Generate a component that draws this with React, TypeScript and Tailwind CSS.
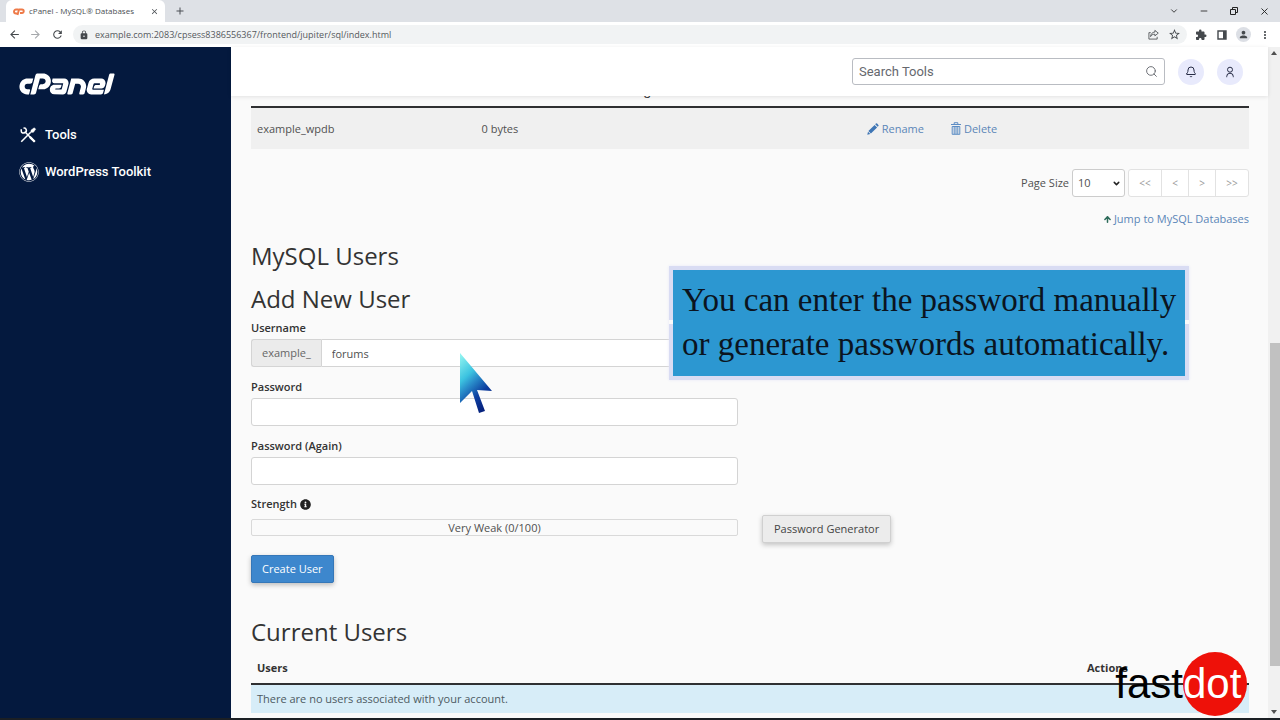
import { useState } from "react";
import type { ReactNode } from "react";
import { FaCpanel, FaWordpress, FaInfoCircle } from "react-icons/fa";
import {
  MdAdd,
  MdArrowBack,
  MdArrowForward,
  MdClose,
  MdExtension,
  MdLock,
  MdMoreVert,
  MdPerson,
  MdRefresh,
  MdStarBorder,
} from "react-icons/md";
import { ArrowUp, Bell, ChevronDown, Minus, Search, X } from "lucide-react";

const BrowserBar = () => (
  <header className="shrink-0">
    <div className="flex h-[22px] items-center bg-[#dee1e6] pl-[6px] text-[#4b4f54]">
      <div className="flex h-full w-[159px] items-center rounded-t-md bg-white pr-[6px] pl-[7px]">
        <svg viewBox="0 0 24 16" className="h-[9px] w-3 shrink-0" fill="none" stroke="#ee7a48" strokeWidth="3.8">
          <path d="M10 4H6a4 4 0 0 0 0 8h3" />
          <path d="M9 15l3-11h6a3.5 3.5 0 0 1 0 7h-4" />
        </svg>
        <span className="ml-1 grow text-[8px] whitespace-nowrap">cPanel - MySQL® Databases</span>
        <button aria-label="Close tab">
          <MdClose className="size-[9px]" />
        </button>
      </div>
      <button aria-label="New tab" className="ml-[9px]">
        <MdAdd className="size-3" />
      </button>
      <div className="ml-auto flex items-center gap-5 pr-[10px] text-[#222]">
        <button aria-label="Search tabs">
          <ChevronDown className="size-[10px]" />
        </button>
        <button aria-label="Minimize">
          <Minus className="size-[10px]" />
        </button>
        <button aria-label="Restore">
          <svg viewBox="0 0 10 10" className="size-[10px]" fill="none" stroke="currentColor">
            <path d="M1.5 3.5h5v5h-5zM3.5 3.2V1.5h5v5H6.8" />
          </svg>
        </button>
        <button aria-label="Close window">
          <X className="size-[11px]" />
        </button>
      </div>
    </div>
    <div className="flex h-[25px] items-center bg-white pr-[9px] pl-2 text-[#45494d]">
      <button aria-label="Back">
        <MdArrowBack className="size-[13px]" />
      </button>
      <button aria-label="Forward" className="ml-2 text-[#a6a9ac]">
        <MdArrowForward className="size-[13px]" />
      </button>
      <button aria-label="Reload" className="ml-[9px]">
        <MdRefresh className="size-[13px]" />
      </button>
      <div className="ml-[9px] flex h-[19px] grow items-center rounded-full bg-[#f1f3f4] pr-[6px] pl-[6px]">
        <MdLock className="size-[10px]" />
        <input
          aria-label="Address"
          readOnly
          className="ml-[6px] grow bg-transparent text-[9px] text-[#55595d] outline-none"
          value="example.com:2083/cpsess8386556367/frontend/jupiter/sql/index.html"
        />
        <button aria-label="Share">
          <svg viewBox="0 0 12 12" className="size-[11px]" fill="none" stroke="currentColor" strokeWidth="0.9">
            <path d="M3 4H1v7h9V8.5" />
            <path d="M7.5 1.5L11.2 4.5 7.5 7.5V5.7C5 5.7 3.6 6.5 2.8 8.3 3 5.5 4.6 3.5 7.5 3.3z" />
          </svg>
        </button>
        <button aria-label="Bookmark" className="ml-[9px]">
          <MdStarBorder className="size-[13px]" />
        </button>
      </div>
      <button aria-label="Extensions" className="ml-2">
        <MdExtension className="size-3" />
      </button>
      <button aria-label="Side panel" className="ml-[10px]">
        <svg viewBox="0 0 10 10" className="size-[10px]">
          <path d="M1 1h8v8H1z" fill="none" stroke="currentColor" strokeWidth="1.4" />
          <path d="M6 1h3v8H6z" fill="currentColor" />
        </svg>
      </button>
      <button aria-label="Profile" className="ml-[9px] rounded-full bg-[#dcdfe5] p-[2px]">
        <MdPerson className="size-[11px]" />
      </button>
      <button aria-label="Menu" className="ml-2">
        <MdMoreVert className="size-3" />
      </button>
    </div>
  </header>
);

const Sidebar = () => (
  <nav className="w-[231px] shrink-0 bg-[#04193e] pt-[26px] pl-[19px] font-[Roboto,sans-serif] text-[13px] font-medium text-white">
    <FaCpanel viewBox="0 176 640 148" className="h-[22px] w-24" />
    <ul className="mt-7 flex flex-col gap-[13px]">
      <li>
        <a href="#tools" className="flex h-6 items-center gap-2">
          <svg viewBox="0 0 20 20" className="size-[18px]" fill="none" stroke="currentColor" strokeWidth="1.7">
            <path d="M7 7l10.5 10.5M2.5 17.5L13 7" />
            <path d="M2.5 3.5v2a2.3 2.3 0 0 0 4 1.6 2.3 2.3 0 0 0-1.5-4.6" />
            <path d="M13 7l.5-2.5 3.5-2.5 1.5 1.5L16 7z" fill="currentColor" strokeWidth="0.6" />
            <path d="M12 12l5.5 5.5" strokeWidth="2.6" />
          </svg>
          Tools
        </a>
      </li>
      <li>
        <a href="#wordpress" className="flex h-6 items-center gap-[6px]">
          <FaWordpress className="size-5" />
          WordPress Toolkit
        </a>
      </li>
    </ul>
  </nav>
);

const TopBar = () => (
  <div className="relative z-10 flex h-[49px] shrink-0 items-center justify-end gap-[13px] bg-white pr-[25px] shadow-[0_1px_4px_rgba(0,0,0,0.1)]">
    <div className="flex h-[27px] w-[313px] items-center rounded-[3px] border border-[#b9bcc2] bg-white px-[6px]">
      <input
        aria-label="Search Tools"
        placeholder="Search Tools"
        className="min-w-0 grow font-[Roboto,sans-serif] text-[13px] outline-none placeholder:text-[#65686e]"
      />
      <Search className="size-[13px] text-[#6b6e74]" strokeWidth={1.8} />
    </div>
    <button aria-label="Notifications" className="flex size-[26px] items-center justify-center rounded-full bg-[#e8eafc] text-[#262b45]">
      <Bell className="size-3" />
    </button>
    <button aria-label="Account" className="flex size-[26px] items-center justify-center rounded-full bg-[#e8eafc] text-[#262b45]">
      <svg viewBox="0 0 12 12" className="size-3" fill="none" stroke="currentColor">
        <circle cx="6" cy="3.7" r="2.5" />
        <path d="M2.7 11.2v-.7a3.3 3.3 0 0 1 6.6 0v.7" />
      </svg>
    </button>
  </div>
);

const DatabasesTable = () => (
  <table className="w-full table-fixed text-left">
    <colgroup>
      <col className="w-[22.5%]" />
      <col className="w-[13%]" />
      <col className="w-[25.6%]" />
      <col />
    </colgroup>
    <thead>
      <tr className="h-8 border-b-2 border-[#2f3032] text-[#333]">
        <th className="pl-[6px] font-semibold">Database</th>
        <th className="pl-[6px] font-semibold">Size</th>
        <th className="pl-[6px] font-semibold">Privileged Users</th>
        <th className="pl-[6px] font-semibold">Actions</th>
      </tr>
    </thead>
    <tbody>
      <tr className="h-[42px] bg-[#f0f0f0]">
        <td className="pl-[6px]">example_wpdb</td>
        <td className="pl-[6px]">0 bytes</td>
        <td />
        <td className="pl-[6px]">
          <div className="flex gap-[27px] text-[#5b86b8]">
            <a href="#rename" className="flex items-center gap-[3px]">
              <svg viewBox="0 0 12 12" className="size-3" fill="#3f76b5">
                <path d="M7.600 1.900l2.500 2.500-6.200 6.200-2.500-2.500zM8.200 1.300l.7-.7q.6-.5 1.200 0l1.300 1.300q.5.600 0 1.200l-.7.7zM1 8.700l2.300 2.300L.3 11.700z" />
              </svg>
              Rename
            </a>
            <a href="#delete" className="flex items-center gap-[3px]">
              <svg viewBox="0 0 10 13" className="h-[13px] w-[10px]" fill="none" stroke="#5b8cc4">
                <path d="M0 2.5h10M3.2 2V.7h3.6V2" />
                <path d="M1.2 4.5h7.6v7.8H1.2zM3.2 4.5v7.5M5 4.5v7.5M6.8 4.5v7.5" />
              </svg>
              Delete
            </a>
          </div>
        </td>
      </tr>
    </tbody>
  </table>
);

const pagerButton = "h-full border-r border-[#e2e2e2] text-[#999] last:border-r-0";

const Pager = () => {
  const [size, setSize] = useState("10");

  return (
    <div className="mt-5 flex h-7 items-center justify-end">
      <label htmlFor="page-size">Page Size</label>
      <div className="relative ml-[3px] h-full">
        <select
          id="page-size"
          value={size}
          onChange={(e) => setSize(e.target.value)}
          className="h-full w-[53px] appearance-none rounded-[3px] border border-[#ccc] bg-white pl-[5px]"
        >
          <option>10</option>
          <option>20</option>
          <option>50</option>
        </select>
        <ChevronDown className="pointer-events-none absolute top-[10px] right-1 size-[9px] text-[#222]" strokeWidth={4} />
      </div>
      <div className="ml-[3px] flex h-full overflow-hidden rounded-[3px] border border-[#e2e2e2] bg-white text-[10px]">
        <button className={`w-[33px] ${pagerButton}`}>&lt;&lt;</button>
        <button className={`w-[27px] ${pagerButton}`}>&lt;</button>
        <button className={`w-[27px] ${pagerButton}`}>&gt;</button>
        <button className={`w-8 ${pagerButton}`}>&gt;&gt;</button>
      </div>
    </div>
  );
};

const Title = ({ children }: { children: ReactNode }) => (
  <h2 className="text-2xl leading-8 text-[#333]">{children}</h2>
);

const labelClass = "mb-[3px] font-semibold text-[#333]";
const inputClass =
  "h-7 w-full rounded-[3px] border border-[#d4d4d4] bg-white px-[10px] outline-none";

const AddUserForm = () => {
  const [username, setUsername] = useState("forums");

  return (
    <form onSubmit={(e) => e.preventDefault()}>
      <div className="grid grid-cols-2 items-end gap-x-6">
        <div className="flex flex-col">
          <label htmlFor="username" className={`mt-[5px] ${labelClass}`}>
            Username
          </label>
          <div className="flex">
            <span className="flex h-7 items-center rounded-l-[3px] border border-r-0 border-[#d4d4d4] bg-[#ebebeb] px-[10px] text-[#666]">
              example_
            </span>
            <input
              id="username"
              value={username}
              onChange={(e) => setUsername(e.target.value)}
              className="h-7 min-w-0 grow rounded-r-[3px] border border-[#d4d4d4] bg-white px-[10px] outline-none"
            />
          </div>
          <label htmlFor="password" className={`mt-3 ${labelClass}`}>
            Password
          </label>
          <input id="password" type="password" className={inputClass} />
          <label htmlFor="password-again" className={`mt-3 ${labelClass}`}>
            Password (Again)
          </label>
          <input id="password-again" type="password" className={inputClass} />
          <div className="mt-[11px] flex items-center gap-[3px] font-semibold text-[#333]">
            Strength
            <FaInfoCircle className="size-[11px] text-[#222]" />
          </div>
          <div className="mt-[7px] mb-[7px] h-[17px] rounded-[2px] border border-[#d9d9d9] text-center leading-[15px]">
            Very Weak (0/100)
          </div>
        </div>
        <div>
          <button
            type="button"
            className="h-7 rounded-[2px] border border-[#d0d0d0] bg-[#ececec] px-[11px] text-[#444] shadow-[0_2px_5px_rgba(0,0,0,0.22)]"
          >
            Password Generator
          </button>
        </div>
      </div>
      <button
        type="submit"
        className="mt-3 h-7 rounded-[2px] border border-[#3577b8] bg-[#3d87cd] px-[10px] text-white shadow-[0_2px_5px_rgba(0,0,0,0.25)]"
      >
        Create User
      </button>
    </form>
  );
};

const UsersTable = () => (
  <table className="mt-1 w-full text-left">
    <thead>
      <tr className="h-8 border-b-2 border-[#2f3032] text-[#333]">
        <th className="pl-[6px] font-bold">Users</th>
        <th className="w-[162px] font-bold">Actions</th>
      </tr>
    </thead>
    <tbody>
      <tr className="h-[29px] bg-[#d7edf8] text-[#4d5a62]">
        <td colSpan={2} className="pl-[6px]">
          There are no users associated with your account.
        </td>
      </tr>
    </tbody>
  </table>
);

const Scrollbar = () => (
  <div className="flex w-3 shrink-0 flex-col items-center justify-between bg-[#f1f1f1] py-1">
    <svg viewBox="0 0 6 4" className="h-1 w-[6px]">
      <path d="M0 4l3-4 3 4z" fill="#505050" />
    </svg>
    <div className="flex w-full grow flex-col items-end py-1">
      <div className="grow-[57]" />
      <div className="w-[10px] grow-[65] bg-[#c1c1c1]" />
      <div className="grow-[8]" />
    </div>
    <svg viewBox="0 0 6 4" className="h-1 w-[6px]">
      <path d="M0 0l3 4 3-4z" fill="#505050" />
    </svg>
  </div>
);

const Caption = () => (
  <div className="absolute top-[266px] left-[669px] border-4 border-[#d9dcf3] bg-[#2c97d1] px-[9px] pt-2 pb-[10px] font-['Liberation_Serif',serif] text-[33px] leading-[44px] whitespace-nowrap text-[#0b1420] shadow-[0_0_3px_#e6e8f8]">
    You can enter the password manually
    <br />
    or generate passwords automatically.
    <span className="absolute top-[50px] -left-1 h-1 w-1 bg-[#fafafa]" />
    <span className="absolute top-[50px] -right-1 h-1 w-1 bg-[#fafafa]" />
  </div>
);

const Pointer = () => (
  <svg viewBox="0 0 34 62" className="absolute top-[352px] left-[459px] h-[62px] w-[34px]">
    <defs>
      <linearGradient id="pointer" x1="0.1" y1="0" x2="0.6" y2="1">
        <stop offset="0" stopColor="#8ff3f0" />
        <stop offset="0.35" stopColor="#3cc3e0" />
        <stop offset="0.5" stopColor="#2a8fcb" />
        <stop offset="0.75" stopColor="#0d3fa0" />
        <stop offset="1" stopColor="#06227e" />
      </linearGradient>
    </defs>
    <path d="M1 1l32 38-15-1 8 21-6 2-7-22-12 12z" fill="url(#pointer)" />
  </svg>
);

const FastdotLogo = () => (
  <div className="absolute right-[33px] bottom-[4px] flex h-16 items-center font-['Liberation_Sans',sans-serif] text-[42px] leading-none">
    <span className="relative z-10 text-black">fast</span>
    <span className="flex size-16 items-center rounded-full bg-[#ee1109] text-white">dot</span>
  </div>
);

const App = () => {
  return (
    <div className="relative flex h-screen flex-col overflow-hidden bg-white font-['Open_Sans','Liberation_Sans',sans-serif]">
      <BrowserBar />
      <div className="flex min-h-0 grow">
        <Sidebar />
        <div className="flex min-w-0 grow flex-col bg-[#fafafa]">
          <TopBar />
          <main className="min-h-0 grow overflow-hidden">
            <div className="-mt-[21px] pr-[19px] pl-5 text-[11px] leading-4 text-[#505050]">
              <DatabasesTable />
              <Pager />
              <div className="mt-[14px] flex justify-end">
                <a href="#databases" className="flex items-center gap-[2px] text-[#5b86b8]">
                  <ArrowUp className="size-[9px] text-[#2d6b5a]" strokeWidth={4} />
                  Jump to MySQL Databases
                </a>
              </div>
              <div className="mt-[13px] flex flex-col gap-[11px]">
                <Title>MySQL Users</Title>
                <Title>Add New User</Title>
              </div>
              <AddUserForm />
              <div className="mt-[33px]">
                <Title>Current Users</Title>
              </div>
              <UsersTable />
            </div>
          </main>
        </div>
        <Scrollbar />
      </div>
      <div className="h-[2px] shrink-0 bg-[#1b1f24]" />
      <Pointer />
      <Caption />
      <FastdotLogo />
    </div>
  );
};

export default App;
